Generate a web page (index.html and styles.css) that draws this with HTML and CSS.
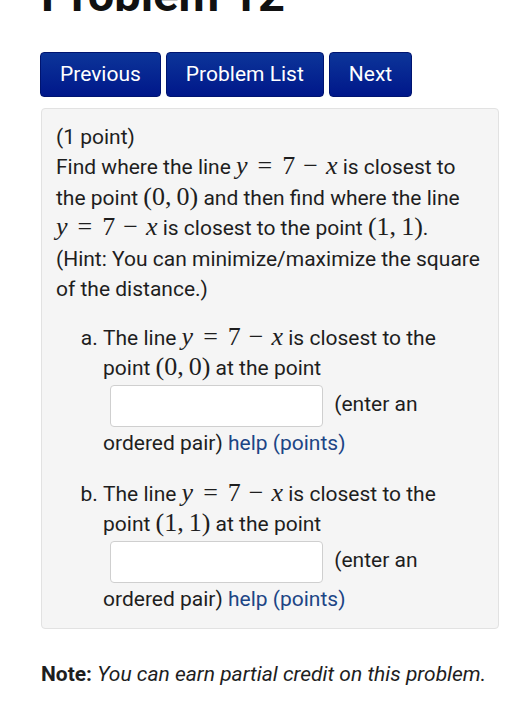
FILE: index.html
```html
<!DOCTYPE html>
<html>
<head>
<meta charset="utf-8">
<link rel="stylesheet" href="styles.css">
</head>
<body>
<div class="page">
  <h1 class="title">Problem 12</h1>
  <div class="nav">
    <span class="btn">Previous</span>
    <span class="btn">Problem List</span>
    <span class="btn">Next</span>
  </div>
  <div class="panel">
    <p class="intro">(1 point)<br>Find where the line <span class="m"><i>y</i><span class="op">=</span>7<span class="bin">−</span><i>x</i></span> is closest to the point <span class="m">(0,<span class="th"></span>0)</span> and then find where the line <span class="m"><i>y</i><span class="op">=</span>7<span class="bin">−</span><i>x</i></span> is closest to the point <span class="m">(1,<span class="th"></span>1)</span>.<br>(Hint: You can minimize/maximize the square of the distance.)</p>
    <ol class="parts">
      <li>The line <span class="m"><i>y</i><span class="op">=</span>7<span class="bin">−</span><i>x</i></span> is closest to the point <span class="m">(0,<span class="th"></span>0)</span> at the point <input class="answer" type="text"> (enter an ordered pair) <a class="help">help (points)</a></li>
      <li>The line <span class="m"><i>y</i><span class="op">=</span>7<span class="bin">−</span><i>x</i></span> is closest to the point <span class="m">(1,<span class="th"></span>1)</span> at the point <input class="answer" type="text"> (enter an ordered pair) <a class="help">help (points)</a></li>
    </ol>
  </div>
  <p class="note"><b>Note:</b> <i>You can earn partial credit on this problem.</i></p>
</div>
</body>
</html>
```
FILE: styles.css
```css
html, body {
  margin: 0;
  padding: 0;
  background: #fff;
}
body {
  font-family: Roboto, "Liberation Sans", sans-serif;
  font-size: 21px;
  color: #1e1e1e;
}
.page {
  padding: 0 13px 0 40px;
}
.title {
  margin: -31px 0 0 1px;
  font-size: 47px;
  line-height: 51px;
  font-weight: 700;
  color: #111;
}
.nav {
  display: flex;
  gap: 5px;
  margin-top: 32px;
}
.btn {
  display: block;
  padding: 10px 19px;
  line-height: 23px;
  font-size: 21px;
  color: #fff;
  background: linear-gradient(#0c3599, #00178a);
  border: 1px solid #001470;
  border-radius: 4px;
}
.panel {
  margin: 11px 0 0 1px;
  padding: 13px 14px 14px;
  background: #f5f5f5;
  border: 1px solid #e2e2e2;
  border-radius: 4px;
}
.intro {
  margin: 0;
  line-height: 30.4px;
}
.m {
  font-family: "Liberation Serif", "Times New Roman", serif;
  font-size: 26px;
  line-height: 1;
  white-space: nowrap;
}
.m i {
  font-style: italic;
}
.op {
  margin: 0 10px;
}
.bin {
  margin: 0 8px;
}
.th {
  display: inline-block;
  width: 5px;
}
.parts {
  list-style: lower-alpha;
  margin: 19px 0 0;
  padding-left: 47px;
  line-height: 30px;
}
.parts li + li {
  margin-top: 21px;
}
.answer {
  box-sizing: border-box;
  width: 213px;
  height: 42px;
  margin: 2px 6px 1px 7px;
  vertical-align: middle;
  background: #fff;
  border: 1px solid #cfcfcf;
  border-radius: 4px;
}
.help {
  color: #1c4585;
}
.note {
  margin: 30px 0 0 1px;
  line-height: 30px;
}
.note i {
  font-style: italic;
}
```
